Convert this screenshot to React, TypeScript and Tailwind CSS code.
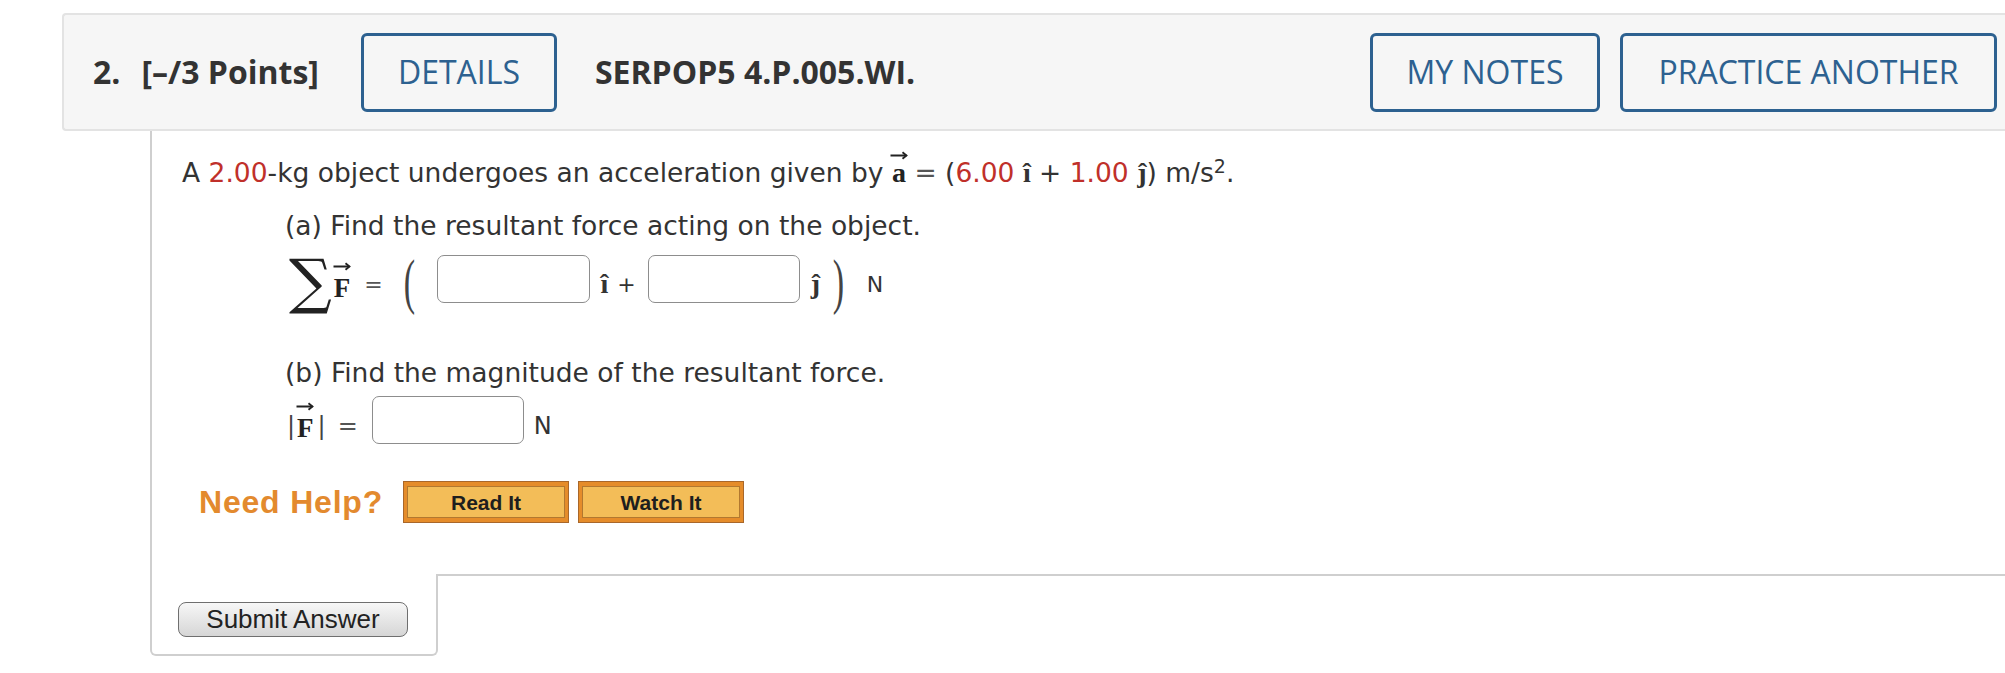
import type { ReactNode } from 'react';

// bold serif letter with a vector arrow over it
function Vec({ children, size = 'text-[28px]', arrowTop = '-top-[4px]' }: { children: ReactNode; size?: string; arrowTop?: string }) {
    return (
        <span className={`relative inline-block font-bold font-['Liberation_Serif',serif] text-[#222] ${size}`}>
            {children}
            <svg
                className={`absolute left-1/2 -translate-x-1/2 ${arrowTop} w-[19px] h-[9px]`}
                viewBox="0 0 19 9"
                fill="none"
                stroke="currentColor"
                strokeWidth="1.8"
            >
                <path d="M1 4.5h16" />
                <path d="M13 1.2l4 3.3-4 3.3" />
            </svg>
        </span>
    );
}

function Hat({ children }: { children: ReactNode }) {
    return <span className="font-bold font-['Liberation_Serif',serif] text-[28px] text-[#333]">{children}</span>;
}

function AnswerBox({ w = 'w-[153px]' }: { w?: string }) {
    return <span className={`inline-block h-[48px] ${w} rounded-[7px] border-[1.5px] border-[#8d8d8d] bg-white`} />;
}

function HelpButton({ label }: { label: string }) {
    return (
        <button className="w-[166px] h-[42px] bg-[#e58c2a] border border-[#a9672a] px-[3px] py-[4px]">
            <span className="flex items-center justify-center w-full h-full bg-[#f3bd58] border border-[#b2782f] font-['Liberation_Sans',sans-serif] font-bold text-[21px] text-[#1e1e1e]">
                {label}
            </span>
        </button>
    );
}

export default function App() {
    return (
        <div className="w-[2005px] h-[673px] overflow-hidden bg-white pt-[13px]">
            {/* Question header */}
            <div className="ml-[62px] h-[118px] flex items-center bg-[#f6f6f6] border-2 border-r-0 border-[#e3e3e3] rounded-l-[4px] pl-[29px] pr-[8px] font-['Open_Sans',sans-serif] text-[32px]">
                <span className="font-bold text-[#333]">2.</span>
                <span className="ml-[21px] font-bold text-[#333]">[–/3 Points]</span>
                <button className="ml-[42px] w-[196px] h-[79px] flex items-center justify-center border-[3px] border-[#2d6190] rounded-[6px] text-[#2d6190]">
                    DETAILS
                </button>
                <span className="ml-[38px] font-bold text-[#333]">SERPOP5 4.P.005.WI.</span>
                <div className="ml-auto flex gap-[20px]">
                    <button className="w-[230px] h-[79px] flex items-center justify-center border-[3px] border-[#2d6190] rounded-[6px] text-[#2d6190]">
                        MY NOTES
                    </button>
                    <button className="w-[377px] h-[79px] flex items-center justify-center border-[3px] border-[#2d6190] rounded-[6px] text-[#2d6190]">
                        PRACTICE ANOTHER
                    </button>
                </div>
            </div>

            {/* Question body */}
            <div className="ml-[150px] font-['DejaVu_Sans',sans-serif] text-[26.5px] text-[#333]">
                <div className="border-l-2 border-[#cfcfcf] pl-[30px] pb-[51px]">
                    <div className="pt-[24px] h-[60px] leading-[36px] whitespace-nowrap">
                        A <span className="text-[#c0302a]">2.00</span>-kg object undergoes an acceleration given by{' '}
                        <Vec>a</Vec> <span className="text-[#555]">=</span> (<span className="text-[#c0302a]">6.00</span>{' '}
                        <Hat>î</Hat> + <span className="text-[#c0302a]">1.00</span> <Hat>ĵ</Hat>) m/s
                        <sup className="text-[19px]">2</sup>.
                    </div>

                    <div className="pl-[103px]">
                        <div className="mt-[17px] h-[36px] leading-[36px] whitespace-nowrap">
                            (a) Find the resultant force acting on the object.
                        </div>
                        <div className="mt-[16px] h-[48px] flex items-center whitespace-nowrap">
                            <span className="ml-[4px] font-['DejaVu_Serif',serif] text-[60px] leading-none text-[#222] -mt-[6px]">∑</span>
                            <span className="ml-[2px] mt-[8px]">
                                <Vec size="text-[27px]" arrowTop="-top-[6px]">F</Vec>
                            </span>
                            <span className="ml-[14px] text-[#555] text-[22px]">=</span>
                            <span className="ml-[16px] font-['Liberation_Serif',serif] text-[62px] leading-none text-[#444] scale-x-[0.55] -mt-[6px]">(</span>
                            <span className="ml-[18px]">
                                <AnswerBox />
                            </span>
                            <span className="ml-[10px]">
                                <Hat>î</Hat>
                            </span>
                            <span className="ml-[9px] text-[22px]">+</span>
                            <span className="ml-[12px]">
                                <AnswerBox w="w-[152px]" />
                            </span>
                            <span className="ml-[11px]">
                                <Hat>ĵ</Hat>
                            </span>
                            <span className="ml-[8px] font-['Liberation_Serif',serif] text-[62px] leading-none text-[#444] scale-x-[0.55] -mt-[6px]">)</span>
                            <span className="ml-[18px] text-[22px]">N</span>
                        </div>

                        <div className="mt-[47px] h-[36px] leading-[36px] whitespace-nowrap">
                            (b) Find the magnitude of the resultant force.
                        </div>
                        <div className="mt-[11px] h-[47px] flex items-center whitespace-nowrap">
                            <span className="ml-[2px] text-[24px] text-[#444]">|</span>
                            <span className="ml-[2px] mt-[6px]">
                                <Vec size="text-[27px]" arrowTop="-top-[6px]">F</Vec>
                            </span>
                            <span className="ml-[4px] text-[24px] text-[#444]">|</span>
                            <span className="ml-[12px] text-[24px] text-[#555]">=</span>
                            <span className="ml-[14px]">
                                <AnswerBox w="w-[152px] h-[47px]" />
                            </span>
                            <span className="ml-[10px] text-[24px]">N</span>
                        </div>
                    </div>

                    <div className="mt-[32px] h-[42px] flex items-center">
                        <span className="ml-[17px] font-['Liberation_Sans',sans-serif] font-bold text-[32px] text-[#e38a2e] tracking-[0.8px]">
                            Need Help?
                        </span>
                        <span className="ml-[20px]">
                            <HelpButton label="Read It" />
                        </span>
                        <span className="ml-[9px]">
                            <HelpButton label="Watch It" />
                        </span>
                    </div>
                </div>

                {/* Submit area */}
                <div className="flex">
                    <div className="w-[288px] h-[82px] border-2 border-t-0 border-[#cfcfcf] rounded-b-[6px] pl-[26px] pt-[25px]">
                        <button className="w-[230px] h-[35px] rounded-[8px] border-[1.5px] border-[#6f6f6f] bg-gradient-to-b from-[#f7f7f7] to-[#d6d6d6] font-['Liberation_Sans',sans-serif] text-[26px] leading-none text-[#222]">
                            Submit Answer
                        </button>
                    </div>
                    <div className="flex-1 border-t-2 border-[#cfcfcf]" />
                </div>
            </div>
        </div>
    );
}
